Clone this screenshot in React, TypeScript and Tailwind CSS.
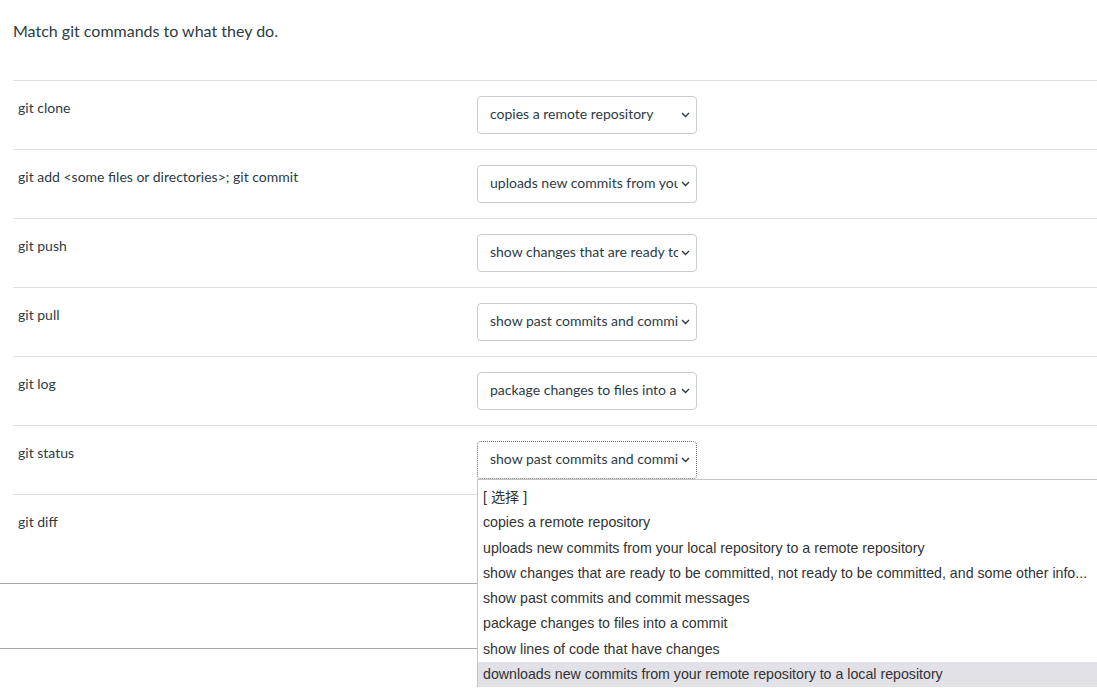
import React from 'react';

const rows = [
  { cmd: 'git clone', value: 'copies a remote repository' },
  { cmd: 'git add <some files or directories>; git commit', value: 'uploads new commits from your local repository to a remote repository' },
  { cmd: 'git push', value: 'show changes that are ready to be committed, not ready to be committed, and some other info' },
  { cmd: 'git pull', value: 'show past commits and commit messages' },
  { cmd: 'git log', value: 'package changes to files into a commit' },
  { cmd: 'git status', value: 'show past commits and commit messages', focused: true },
  { cmd: 'git diff', value: null },
];

const options = [
  '[ 选择 ]',
  'copies a remote repository',
  'uploads new commits from your local repository to a remote repository',
  'show changes that are ready to be committed, not ready to be committed, and some other info...',
  'show past commits and commit messages',
  'package changes to files into a commit',
  'show lines of code that have changes',
  'downloads new commits from your remote repository to a local repository',
];

function Chevron() {
  return (
    <svg width="9" height="6" viewBox="0 0 9 6" className="shrink-0">
      <path d="M1 1l3.5 3.5L8 1" fill="none" stroke="#2d3b45" strokeWidth="1.4" />
    </svg>
  );
}

function FakeSelect({ value, focused }: { value: string; focused?: boolean }) {
  return (
    <div
      className={
        'flex h-[38px] w-[220px] items-center rounded-[4px] bg-white pl-[12px] pr-[6px] ' +
        (focused ? 'border border-dotted border-[#707070]' : 'border border-[#c7cdd1]')
      }
    >
      <span className="mr-[3px] flex-1 overflow-hidden whitespace-nowrap pb-[3px] text-[14px] leading-[20px] text-[#2d3b45]">
        {value}
      </span>
      <Chevron />
    </div>
  );
}

export default function App() {
  return (
    <div className="relative h-[688px] w-full overflow-hidden bg-white font-['Lato',sans-serif] text-[#2d3b45]">
      <div className="px-[13px] pt-[19px] text-[16px] leading-[24px]">Match git commands to what they do.</div>

      <div className="ml-[13px] mt-[37px]">
        {rows.map((r) => (
          <div
            key={r.cmd}
            className={'flex border-t border-[#dfe2e4] ' + (r.value ? 'h-[69px]' : 'h-[89px]')}
          >
            <div className="w-[464px] pl-[5px] pt-[17px] text-[14px] leading-[20px]">{r.cmd}</div>
            <div className="pt-[15px]">{r.value && <FakeSelect value={r.value} focused={r.focused} />}</div>
          </div>
        ))}
      </div>
      <div className="h-[65px] border-t border-[#a9a9a9]" />
      <div className="border-t border-[#a9a9a9]" />

      <div className="absolute left-[477px] top-[479px] w-[660px] border-l border-t border-[#c4c4c4] bg-white pt-[5px] font-['Liberation_Sans',Arial,sans-serif] text-[14.2px] text-[#333]">
        {options.map((o, i) => (
          <div
            key={o}
            className={
              'flex h-[25.3px] items-center whitespace-nowrap pl-[5px] ' +
              (i === options.length - 1 ? 'bg-[#e1e1e7]' : '')
            }
          >
            {i === 0 ? <span className="font-['Liberation_Sans','Noto_Sans_CJK_SC',sans-serif]">{o}</span> : o}
          </div>
        ))}
      </div>
    </div>
  );
}
